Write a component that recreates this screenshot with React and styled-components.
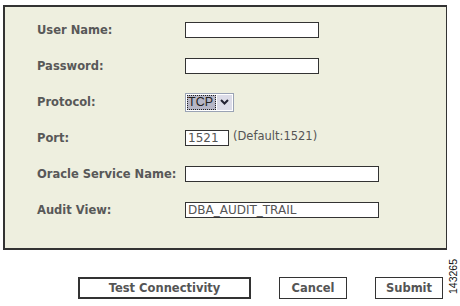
import styled, { createGlobalStyle } from "styled-components";

const GlobalStyle = createGlobalStyle`
  body {
    margin: 0;
    background: #fff;
    font-family: "DejaVu Sans", Verdana, sans-serif;
  }
`;

const Page = styled.div`
  position: relative;
  width: 460px;
  height: 306px;
  padding: 5px 0 0 3px;
  box-sizing: border-box;
`;

const Panel = styled.div`
  width: 444px;
  height: 245px;
  box-sizing: border-box;
  background: #eeefdf;
  border: 2px solid #333;
  border-right-width: 1.5px;
  padding: 5px 0 0 32px;
`;

const Form = styled.div`
  display: grid;
  grid-template-columns: 148px auto;
  grid-auto-rows: 36px;
  align-items: center;
`;

const Label = styled.div`
  font-size: 11.5px;
  font-weight: bold;
  color: #585858;
`;

const Field = styled.div`
  display: flex;
  align-items: center;
  gap: 4px;
`;

const TextInput = styled.div`
  width: ${({ w }) => w}px;
  height: 16px;
  box-sizing: border-box;
  background: #fff;
  border: 1px solid #333;
  font-size: 12px;
  color: #555;
  padding: 0 0 0 2px;
  line-height: 15px;
  white-space: nowrap;
`;

const Hint = styled.span`
  font-size: 11.5px;
  color: #555;
  margin-top: -4px;
`;

const Select = styled.div`
  display: flex;
  width: 49px;
  height: 19px;
  box-sizing: border-box;
  border: 1px solid #9aa3b5;
  background: #fff;
  padding: 1px;
  gap: 1px;
`;

const SelectValue = styled.div`
  flex: 1;
  background: #b6b6c6;
  outline: 1px dotted #222;
  outline-offset: -1px;
  font-family: "Liberation Sans", Arial, sans-serif;
  font-size: 12.5px;
  color: #222;
  line-height: 15px;
  padding-left: 1px;
`;

const SelectArrow = styled.div`
  width: 15px;
  background: #dcdce8;
  display: flex;
  align-items: center;
  justify-content: center;
`;

const Buttons = styled.div`
  display: flex;
  gap: 28px;
  padding: 27px 0 0 75px;
`;

const Button = styled.div`
  width: ${({ w }) => w}px;
  height: 22px;
  box-sizing: border-box;
  border: ${({ primary }) => (primary ? "2px" : "1px")} solid #333;
  background: #fff;
  display: flex;
  align-items: center;
  justify-content: center;
  font-size: 11.5px;
  font-weight: bold;
  color: #555;
`;

/* figure number printed sideways at the bottom right */
const FigureId = styled.div`
  position: absolute;
  left: 448px;
  top: 259px;
  width: 10px;
  writing-mode: vertical-rl;
  transform: rotate(180deg);
  font-family: "Liberation Sans", Arial, sans-serif;
  font-size: 10.5px;
  color: #111;
  line-height: 10px;
`;

const rows = [
  { label: "User Name:", w: 134 },
  { label: "Password:", w: 134 },
  { label: "Protocol:", select: true },
  { label: "Port:", w: 44, value: "1521", hint: "(Default:1521)" },
  { label: "Oracle Service Name:", w: 194 },
  { label: "Audit View:", w: 194, value: "DBA_AUDIT_TRAIL" },
];

export default function App() {
  return (
    <Page>
      <GlobalStyle />
      <Panel>
        <Form>
          {rows.map((r) => [
            <Label key={r.label}>{r.label}</Label>,
            <Field key={r.label + "-field"}>
              {r.select ? (
                <Select>
                  <SelectValue>TCP</SelectValue>
                  <SelectArrow>
                    <svg width="9" height="6" viewBox="0 0 9 6">
                      <path d="M1 1 L4.5 4.5 L8 1" fill="none" stroke="#223" strokeWidth="2" />
                    </svg>
                  </SelectArrow>
                </Select>
              ) : (
                <TextInput w={r.w}>{r.value}</TextInput>
              )}
              {r.hint && <Hint>{r.hint}</Hint>}
            </Field>,
          ])}
        </Form>
      </Panel>
      <Buttons>
        <Button primary w={173}>Test Connectivity</Button>
        <Button w={68}>Cancel</Button>
        <Button w={68}>Submit</Button>
      </Buttons>
      <FigureId>143265</FigureId>
    </Page>
  );
}
